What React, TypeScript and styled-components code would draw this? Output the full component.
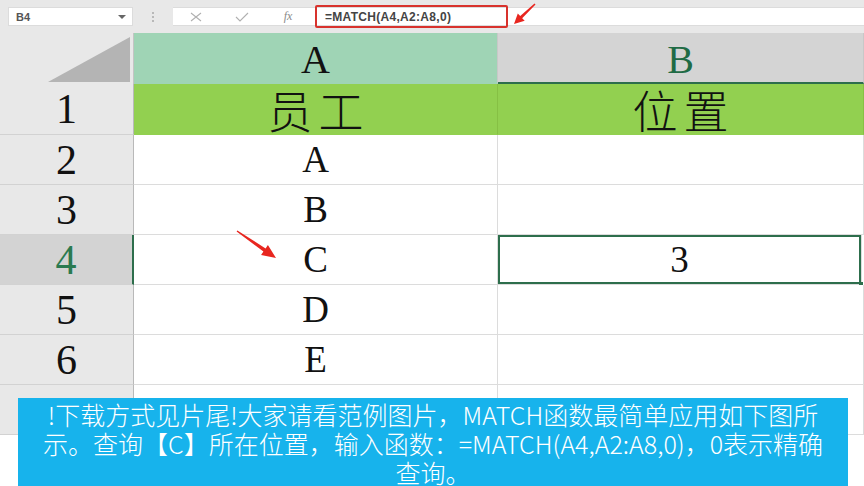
import React from "react";
import styled, { createGlobalStyle } from "styled-components";

const Global = createGlobalStyle`
  html, body { margin: 0; padding: 0; background: #ffffff; }
  #root { width: 864px; height: 486px; }
`;

const Page = styled.div`
  position: relative;
  width: 864px;
  height: 486px;
  overflow: hidden;
  background: #ffffff;
  font-family: "Liberation Sans", Arial, sans-serif;
`;

const FormulaBar = styled.div`
  display: flex;
  align-items: center;
  height: 33px;
  background: #e8e8e8;
  padding-left: 8px;
  box-sizing: border-box;
`;

const NameBox = styled.div`
  display: flex;
  align-items: center;
  justify-content: space-between;
  width: 125px;
  height: 19px;
  box-sizing: border-box;
  background: #ffffff;
  border: 1px solid #dcdcdc;
  padding: 0 6px 0 7px;
  font-size: 11px;
  font-weight: bold;
  color: #555555;
`;

const Caret = styled.span`
  width: 0;
  height: 0;
  border-left: 4px solid transparent;
  border-right: 4px solid transparent;
  border-top: 4px solid #666666;
`;

const Splitter = styled.div`
  width: 40px;
  display: flex;
  flex-direction: column;
  align-items: center;
  gap: 2px;
`;

const Dot = styled.span`
  width: 2px;
  height: 2px;
  border-radius: 1px;
  background: #a8a8a8;
`;

const FormulaInput = styled.div`
  flex: 1;
  display: flex;
  align-items: center;
  height: 19px;
  background: #ffffff;
  border-top: 1px solid #dcdcdc;
  border-bottom: 1px solid #dcdcdc;
  box-sizing: border-box;
`;

const IconSlot = styled.span`
  width: 46px;
  display: flex;
  align-items: center;
  justify-content: center;
  color: #a9a9a9;
`;

const Fx = styled.span`
  font-family: "Liberation Serif", serif;
  font-style: italic;
  font-size: 12px;
  color: #8a8a8a;
`;

const FormulaBox = styled.div`
  margin-left: 4px;
  width: 193px;
  height: 23px;
  box-sizing: border-box;
  border: 2px solid #d8322d;
  border-radius: 2px;
  display: flex;
  align-items: center;
  padding-left: 8px;
  font-size: 12px;
  font-weight: bold;
  letter-spacing: 0.3px;
  color: #444444;
`;

const Sheet = styled.div`
  display: grid;
  grid-template-columns: 134px 364px 1fr;
  grid-template-rows: 51px 51px repeat(6, 50px);
`;

const Corner = styled.div`
  position: relative;
  background: #e8e8e8;
  border-right: 1px solid #c4c4c4;
  &::after {
    content: "";
    position: absolute;
    left: 48px;
    top: 4px;
    right: 3px;
    bottom: 2px;
    background: #b4b4b4;
    clip-path: polygon(100% 0, 100% 100%, 0 100%);
  }
`;

const ColHeader = styled.div<{ $tone: "green" | "gray" }>`
  display: flex;
  align-items: center;
  justify-content: center;
  padding-top: 5px;
  font-family: "Liberation Serif", serif;
  font-size: 40px;
  line-height: 1;
  box-sizing: border-box;
  background: ${(p) => (p.$tone === "green" ? "#9fd4b5" : "#d4d4d4")};
  color: ${(p) => (p.$tone === "green" ? "#111111" : "#1f6b45")};
  border-right: 1px solid #c8c8c8;
  border-bottom: ${(p) => (p.$tone === "gray" ? "2px solid #2d6e4c" : "2px solid #9fd4b5")};
`;

const RowHeader = styled.div<{ $active?: boolean }>`
  display: flex;
  align-items: center;
  justify-content: center;
  font-family: "Liberation Serif", serif;
  font-size: 42px;
  line-height: 1;
  box-sizing: border-box;
  background: ${(p) => (p.$active ? "#d3d3d3" : "#e8e8e8")};
  color: ${(p) => (p.$active ? "#2b7a50" : "#111111")};
  border-bottom: 1px solid #d2d2d2;
  border-right: ${(p) => (p.$active ? "2px solid #2d6e4c" : "1px solid #b9b9b9")};
`;

const Cell = styled.div<{ $head?: boolean; $selected?: boolean }>`
  position: relative;
  display: flex;
  align-items: center;
  justify-content: center;
  box-sizing: border-box;
  line-height: 1;
  font-family: ${(p) =>
    p.$head ? '"Noto Sans CJK SC", sans-serif' : '"Liberation Serif", serif'};
  font-size: ${(p) => (p.$head ? "45px" : "37px")};
  font-weight: ${(p) => (p.$head ? 300 : 400)};
  letter-spacing: ${(p) => (p.$head ? "6px" : "0")};
  padding-left: ${(p) => (p.$head ? "6px" : "0")};
  color: #111111;
  background: ${(p) => (p.$head ? "#92d050" : "#ffffff")};
  border-bottom: 1px solid ${(p) => (p.$head ? "#92d050" : "#dcdcdc")};
  border-right: 1px solid ${(p) => (p.$head ? "#86c044" : "#dcdcdc")};
  box-shadow: ${(p) => (p.$selected ? "inset 0 0 0 2px #2d6e4c" : "none")};
  margin-right: ${(p) => (p.$selected ? "2px" : "0")};
`;

const FillHandle = styled.span`
  position: absolute;
  right: -2px;
  bottom: -2px;
  width: 4px;
  height: 4px;
  background: #2d6e4c;
`;

const Caption = styled.div`
  position: absolute;
  left: 18px;
  right: 16px;
  top: 398px;
  bottom: 0;
  overflow: hidden;
  background: #17b3ec;
  color: #ffffff;
  font-family: "Noto Sans CJK SC", "Noto Sans", sans-serif;
  font-weight: 300;
  font-size: 25px;
  line-height: 29px;
  text-align: center;
  padding-top: 2px;
`;

const CaptionLine = styled.div`
  white-space: nowrap;
`;

const ArrowLayer = styled.svg`
  position: absolute;
  left: 0;
  top: 0;
  width: 864px;
  height: 486px;
  pointer-events: none;
`;

const rows = [
  { n: "2", a: "A", b: "" },
  { n: "3", a: "B", b: "" },
  { n: "4", a: "C", b: "3", active: true },
  { n: "5", a: "D", b: "" },
  { n: "6", a: "E", b: "" },
  { n: "", a: "", b: "" },
];

export default function App() {
  return (
    <Page>
      <Global />
      <FormulaBar>
        <NameBox>
          <span>B4</span>
          <Caret />
        </NameBox>
        <Splitter>
          <Dot />
          <Dot />
          <Dot />
        </Splitter>
        <FormulaInput>
          <IconSlot>
            <svg width="12" height="10" viewBox="0 0 12 10">
              <path d="M1 1 L11 9 M11 1 L1 9" stroke="#b0b0b0" strokeWidth="1.1" fill="none" />
            </svg>
          </IconSlot>
          <IconSlot>
            <svg width="14" height="10" viewBox="0 0 14 10">
              <path d="M1 5 L5 9 L13 1" stroke="#b0b0b0" strokeWidth="1.1" fill="none" />
            </svg>
          </IconSlot>
          <IconSlot>
            <Fx>fx</Fx>
          </IconSlot>
          <FormulaBox>=MATCH(A4,A2:A8,0)</FormulaBox>
        </FormulaInput>
      </FormulaBar>

      <Sheet>
        <Corner />
        <ColHeader $tone="green">A</ColHeader>
        <ColHeader $tone="gray">B</ColHeader>

        <RowHeader>1</RowHeader>
        <Cell $head>员工</Cell>
        <Cell $head>位置</Cell>

        {rows.map((r, i) => (
          <React.Fragment key={i}>
            <RowHeader $active={r.active}>{r.n}</RowHeader>
            <Cell>{r.a}</Cell>
            <Cell $selected={r.active}>
              {r.b}
              {r.active && <FillHandle />}
            </Cell>
          </React.Fragment>
        ))}
      </Sheet>

      <ArrowLayer viewBox="0 0 864 486">
        <polygon
          fill="#e8261f"
          points="534.5,3.6 520.2,16.0 517.8,13.5 514,24 524.7,20.7 522.2,18.2 535.5,4.4"
        />
        <polygon
          fill="#e8261f"
          points="237.4,230.5 265.6,248.4 267.9,245.1 276,258 261.1,254.9 263.4,251.6 236.6,231.5"
        />
      </ArrowLayer>

      <Caption>
        <CaptionLine>!下载方式见片尾!大家请看范例图片，MATCH函数最简单应用如下图所</CaptionLine>
        <CaptionLine>示。查询【C】所在位置，输入函数：=MATCH(A4,A2:A8,0)，0表示精确</CaptionLine>
        <CaptionLine>查询。</CaptionLine>
      </Caption>
    </Page>
  );
}
